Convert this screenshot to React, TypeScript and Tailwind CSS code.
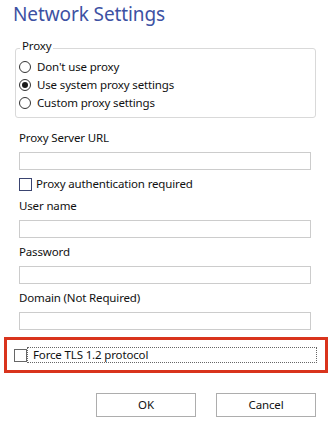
import React from "react";

function Radio({ checked, label }: { checked?: boolean; label: string }) {
  return (
    <div className="flex h-[18px] items-center pl-[3px]">
      <span className="flex h-[12px] w-[12px] items-center justify-center rounded-full border border-[#333333] bg-white">
        {checked && <span className="h-[6px] w-[6px] rounded-full bg-[#1a1a1a]" />}
      </span>
      <span className="ml-[6px] leading-[18px]">{label}</span>
    </div>
  );
}

function Field({ label }: { label: string }) {
  return (
    <div className="mt-[6px] pl-[19px]">
      <div className="h-[16px] leading-[16px]">{label}</div>
      <div className="mt-[6px] h-[18px] w-[292px] border border-[#cccccc] bg-white" />
    </div>
  );
}

export default function App() {
  return (
    <div className="h-[431px] w-[336px] overflow-hidden bg-white font-['Noto_Sans',sans-serif] text-[11.5px] tracking-[-0.15px] text-[#111111]">
      <div className="pl-[13px] text-[19px] leading-[28px] tracking-[-0.1px] text-[#3d51a3]">Network Settings</div>

      <fieldset className="ml-[15px] mt-[10px] w-[301px] rounded-[3px] border border-[#d9d9d9] px-0 pb-[5px] pt-0">
        <legend className="ml-[4px] px-[2px] pb-[4px] leading-[16px]">Proxy</legend>
        <Radio label="Don't use proxy" />
        <Radio checked label="Use system proxy settings" />
        <Radio label="Custom proxy settings" />
      </fieldset>

      <div className="mt-[12px]">
        <Field label="Proxy Server URL" />
      </div>

      <div className="mt-[6px] flex h-[16px] items-center pl-[19px]">
        <span className="h-[13px] w-[13px] border border-[#3a4470] bg-white" />
        <span className="ml-[4px] leading-[16px]">Proxy authentication required</span>
      </div>

      <Field label="User name" />
      <Field label="Password" />
      <Field label="Domain (Not Required)" />

      <div className="ml-[4px] mt-[7px] flex h-[36px] w-[324px] items-center border-[3px] border-[#d9341d] pl-[7px]">
        <span className="h-[13px] w-[13px] border border-[#666666] bg-white" />
        <span className="flex h-[16px] w-[290px] items-center border border-dotted border-[#666666] pl-[5px] leading-[14px]">
          Force TLS 1.2 protocol
        </span>
      </div>

      <div className="mt-[20px] flex justify-end gap-[20px] pr-[20px]">
        <button className="h-[24px] w-[100px] border border-[#adadad] bg-white leading-[22px] text-[#111111]">OK</button>
        <button className="h-[24px] w-[100px] border border-[#adadad] bg-white leading-[22px] text-[#111111]">Cancel</button>
      </div>
    </div>
  );
}
